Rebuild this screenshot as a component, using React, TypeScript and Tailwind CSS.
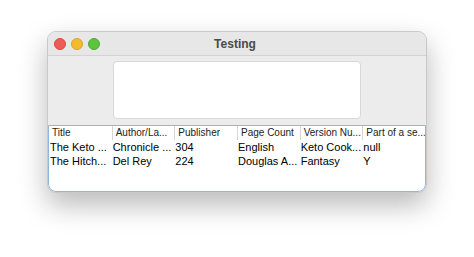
const columns = ['Title', 'Author/La...', 'Publisher', 'Page Count', 'Version Nu...', 'Part of a se...']

const rows = [
  ['The Keto ...', 'Chronicle ...', '304', 'English', 'Keto Cook...', 'null'],
  ['The Hitch...', 'Del Rey', '224', 'Douglas A...', 'Fantasy', 'Y'],
]

export default function App() {
  return (
    <div className="w-[474px] h-[257px] bg-white pt-[31px] pl-[47px] overflow-hidden" style={{ fontFamily: '"Liberation Sans", Arial, sans-serif' }}>
      <div className="w-[380px] h-[162px] rounded-[9px] border border-[#c9c9c9] bg-[#ececec] flex flex-col overflow-hidden shadow-[0_12px_28px_rgba(0,0,0,0.28)]">
        {/* Title bar */}
        <div className="h-[24px] shrink-0 flex items-center bg-[#e7e7e7] border-b border-[#d3d3d3] relative">
          <div className="flex items-center gap-[5px] pl-[6px]">
            <span className="w-[12px] h-[12px] rounded-full bg-[#ee5b54] border border-[#d94a43]" />
            <span className="w-[12px] h-[12px] rounded-full bg-[#f4bb2d] border border-[#dca227]" />
            <span className="w-[12px] h-[12px] rounded-full bg-[#5dc43f] border border-[#4baa33]" />
          </div>
          <span className="flex-1 text-center text-[12px] font-bold text-[#4a4a4a] pr-[56px]">Testing</span>
        </div>

        {/* Text area */}
        <div className="flex justify-center pt-[5px] pb-[6px]">
          <div className="w-[248px] h-[58px] bg-white rounded-[4px] border border-[#d8d8d8]" />
        </div>

        {/* Table */}
        <div className="flex-1 bg-white border border-[#8fb6de] rounded-b-[8px] overflow-hidden">
          <div className="grid grid-cols-6 h-[14px] items-center">
            {columns.map((col, i) => (
              <div key={i} className={`h-full flex items-center pl-[3px] text-[10px] text-[#222] leading-none whitespace-nowrap overflow-hidden ${i > 0 ? 'border-l border-[#d6d6d6]' : ''}`}>
                {col}
              </div>
            ))}
          </div>
          {rows.map((row, r) => (
            <div key={r} className="grid grid-cols-6 h-[14px] items-center">
              {row.map((cell, c) => (
                <div key={c} className="pl-[1px] text-[11px] text-black leading-none whitespace-nowrap overflow-hidden">
                  {cell}
                </div>
              ))}
            </div>
          ))}
        </div>
      </div>
    </div>
  )
}
